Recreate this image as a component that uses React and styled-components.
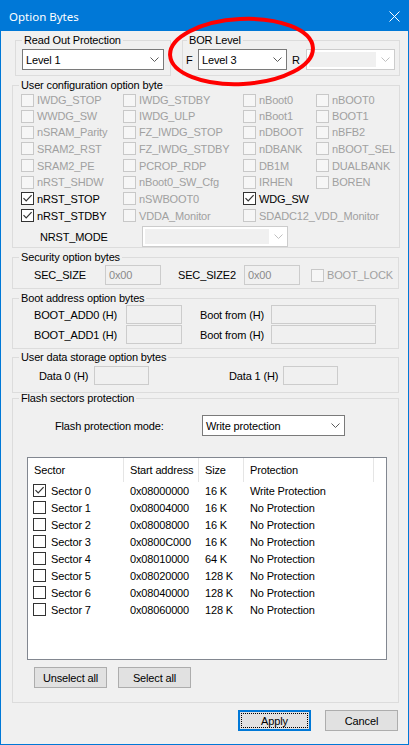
import React from "react";
import styled, { createGlobalStyle, css } from "styled-components";

const GlobalStyle = createGlobalStyle`
  *, *::before, *::after { box-sizing: border-box; }
  html, body { margin: 0; padding: 0; background: #f0f0f0; }
  body { font-family: "Liberation Sans", Arial, sans-serif; font-size: 11px; letter-spacing: -0.15px; color: #000; }
`;

const Window = styled.div`
  position: relative;
  width: 409px;
  height: 745px;
  border: 1px solid #0078d7;
  background: #f0f0f0;
  overflow: hidden;
`;

const TitleBar = styled.div`
  display: flex;
  align-items: center;
  justify-content: space-between;
  height: 30px;
  background: #0078d7;
  color: #fff;
  padding-left: 8px;
  font-family: "Noto Sans", "Open Sans", sans-serif;
  font-size: 11.5px;
  letter-spacing: 0;
`;

const CloseButton = styled.div`
  width: 28px;
  height: 30px;
  display: flex;
  align-items: center;
  justify-content: center;
`;

const Content = styled.div`
  padding-left: 11px;
  display: flex;
  flex-direction: column;
  align-items: flex-start;
`;

const Row = styled.div`
  display: flex;
  align-items: ${(p) => p.$align || "stretch"};
  margin-top: ${(p) => p.$mt || 0}px;
  padding-left: ${(p) => p.$pl || 0}px;
  gap: ${(p) => p.$gap || 0}px;
`;

const Group = styled.fieldset`
  margin: ${(p) => p.$mt ?? 0}px 0 0 ${(p) => p.$ml ?? 0}px;
  padding: 0;
  width: ${(p) => p.$w}px;
  border: 1px solid #dcdcdc;
  min-inline-size: 0;
`;

const Legend = styled.legend`
  margin-left: ${(p) => p.$lm ?? 6}px;
  padding: 0 2px;
  font-size: 11px;
  line-height: 13px;
  color: #000;
`;

const GroupBody = styled.div`
  padding: ${(p) => p.$p || "0"};
  display: flex;
  flex-direction: ${(p) => p.$dir || "column"};
  align-items: ${(p) => p.$align || "flex-start"};
  gap: ${(p) => p.$gap || 0}px;
`;

const OptionGrid = styled.div`
  display: grid;
  grid-template-columns: 102px 120px 73px 1fr;
  grid-template-rows: 16px 16px 16px 17px 17px 16px 17px 17px;
  align-items: center;
  width: 100%;
`;

const CheckItem = styled.div`
  display: flex;
  align-items: center;
  gap: ${(p) => p.$gap ?? 3}px;
  white-space: nowrap;
  margin-left: ${(p) => p.$ml || 0}px;
  color: ${(p) => (p.$disabled ? "#a0a0a0" : "#000")};
`;

const Box = styled.span`
  width: 13px;
  height: 13px;
  flex: none;
  display: flex;
  align-items: center;
  justify-content: center;
  border: 1px solid ${(p) => (p.$disabled ? "#c8c8c8" : "#333")};
  background: ${(p) => (p.$disabled ? "#f6f6f6" : "#fff")};
`;

const Label = styled.span`
  flex: none;
  width: ${(p) => (p.$w ? `${p.$w}px` : "auto")};
  margin-left: ${(p) => p.$ml || 0}px;
  padding-left: ${(p) => p.$pl || 0}px;
  white-space: nowrap;
  color: ${(p) => (p.$disabled ? "#a0a0a0" : "#000")};
`;

const Edit = styled.div`
  flex: none;
  width: ${(p) => p.$w}px;
  height: ${(p) => p.$h || 20}px;
  border: 1px solid #cccccc;
  background: #f0f0f0;
  color: #8a8a8a;
  padding-left: 3px;
  display: flex;
  align-items: center;
`;

const Combo = styled.div`
  flex: none;
  width: ${(p) => p.$w}px;
  height: 21px;
  display: flex;
  align-items: center;
  border: 1px solid ${(p) => (p.$disabled ? "#cccccc" : "#7a7a7a")};
  background: #fff;
  ${(p) =>
    p.$disabled &&
    css`
      padding: 2px 0 2px 2px;
    `}
`;

const ComboText = styled.span`
  flex: 1;
  align-self: stretch;
  display: flex;
  align-items: center;
  padding-left: 3px;
  white-space: nowrap;
  ${(p) =>
    p.$disabled &&
    css`
      background: #f0f0f0;
    `}
`;

const ComboArrow = styled.span`
  flex: none;
  width: 18px;
  display: flex;
  align-items: center;
  justify-content: center;
`;

const ListView = styled.div`
  margin: 21px 0 0 14px;
  width: 360px;
  height: 203px;
  border: 1px solid #828790;
  background: #fff;
`;

const ListRow = styled.div`
  display: grid;
  grid-template-columns: 96px 75px 45px 130px 1fr;
  height: ${(p) => (p.$header ? 24 : 17)}px;
`;

const HeaderCell = styled.div`
  display: flex;
  align-items: center;
  padding-left: 6px;
  border-right: ${(p) => (p.$last ? "none" : "1px solid #e5e5e5")};
  white-space: nowrap;
`;

const Cell = styled.div`
  display: flex;
  align-items: center;
  padding-left: ${(p) => p.$pl ?? 6}px;
  gap: 5px;
  white-space: nowrap;
`;

const Button = styled.button`
  position: relative;
  flex: none;
  width: 73px;
  height: 21px;
  padding: 0;
  margin-left: ${(p) => p.$ml || 0}px;
  background: #e1e1e1;
  border: 1px solid #adadad;
  font-family: "Liberation Sans", Arial, sans-serif;
  font-size: 11px;
  letter-spacing: inherit;
  color: #000;
  ${(p) =>
    p.$default &&
    css`
      border: 2px solid #0078d7;
      &::after {
        content: "";
        position: absolute;
        inset: 1px;
        border: 1px dotted #000;
      }
    `}
`;

const Footer = styled.div`
  display: flex;
  justify-content: flex-end;
  gap: 14px;
  margin-top: 7px;
  padding-right: 10px;
`;

const Annotation = styled.svg`
  position: absolute;
  left: -1px;
  top: -1px;
  pointer-events: none;
`;

const Chevron = ({ disabled }) => (
  <svg width="9" height="5" viewBox="0 0 9 5">
    <polyline
      points="0.5,0.5 4.5,4.5 8.5,0.5"
      fill="none"
      stroke={disabled ? "#c0c0c0" : "#5a5a5a"}
      strokeWidth="1"
    />
  </svg>
);

const Select = ({ w, value, disabled }) => (
  <Combo $w={w} $disabled={disabled}>
    <ComboText $disabled={disabled}>{value}</ComboText>
    <ComboArrow>
      <Chevron disabled={disabled} />
    </ComboArrow>
  </Combo>
);

const Check = ({ label, checked, disabled, gap, ml }) => (
  <CheckItem $disabled={disabled} $gap={gap} $ml={ml}>
    <Box $disabled={disabled}>
      {checked && (
        <svg width="11" height="11" viewBox="0 0 11 11">
          <polyline
            points="1.5,5.2 4.2,8 9.6,2.2"
            fill="none"
            stroke="#333"
            strokeWidth="1.2"
          />
        </svg>
      )}
    </Box>
    {label && <span>{label}</span>}
  </CheckItem>
);

const options = [
  ["IWDG_STOP", "IWDG_STDBY", "nBoot0", "nBOOT0"],
  ["WWDG_SW", "IWDG_ULP", "nBoot1", "BOOT1"],
  ["nSRAM_Parity", "FZ_IWDG_STOP", "nDBOOT", "nBFB2"],
  ["SRAM2_RST", "FZ_IWDG_STDBY", "nDBANK", "nBOOT_SEL"],
  ["SRAM2_PE", "PCROP_RDP", "DB1M", "DUALBANK"],
  ["nRST_SHDW", "nBoot0_SW_Cfg", "IRHEN", "BOREN"],
  ["nRST_STOP*", "nSWBOOT0", "WDG_SW*", null],
  ["nRST_STDBY*", "VDDA_Monitor", "SDADC12_VDD_Monitor", null],
];

const sectors = [
  ["Sector 0", "0x08000000", "16 K", "Write Protection", true],
  ["Sector 1", "0x08004000", "16 K", "No Protection", false],
  ["Sector 2", "0x08008000", "16 K", "No Protection", false],
  ["Sector 3", "0x0800C000", "16 K", "No Protection", false],
  ["Sector 4", "0x08010000", "64 K", "No Protection", false],
  ["Sector 5", "0x08020000", "128 K", "No Protection", false],
  ["Sector 6", "0x08040000", "128 K", "No Protection", false],
  ["Sector 7", "0x08060000", "128 K", "No Protection", false],
];

export default function App() {
  return (
    <>
      <GlobalStyle />
      <Window>
        <TitleBar>
          <span>Option Bytes</span>
          <CloseButton>
            <svg width="11" height="11" viewBox="0 0 11 11">
              <path d="M0.5 0.5 L10.5 10.5 M10.5 0.5 L0.5 10.5" stroke="#fff" strokeWidth="1" />
            </svg>
          </CloseButton>
        </TitleBar>

        <Content>
          <Row $mt={3}>
            <Group $w={156} $ml={3}>
              <Legend>Read Out Protection</Legend>
              <GroupBody $p="2px 6px 5px 6px">
                <Select w={142} value="Level 1" />
              </GroupBody>
            </Group>
            <Group $w={218} $ml={11}>
              <Legend $lm={4}>BOR Level</Legend>
              <GroupBody $p="2px 0 5px 0" $dir="row" $align="center">
                <Label $w={15} $pl={3}>F</Label>
                <Select w={89} value="Level 3" />
                <Label $w={19} $pl={5}>R</Label>
                <Select w={89} value="" disabled />
              </GroupBody>
            </Group>
          </Row>

          <Group $w={388} $mt={3}>
            <Legend>User configuration option byte</Legend>
            <GroupBody $p="0 0 0 8px">
              <OptionGrid>
                {options.flat().map((o, i) =>
                  o ? (
                    <Check
                      key={i}
                      label={o.replace("*", "")}
                      checked={o.endsWith("*")}
                      disabled={!o.endsWith("*")}
                    />
                  ) : (
                    <span key={i} />
                  )
                )}
              </OptionGrid>
              <Row $mt={2} $pl={19} $align="center">
                <Label $w={102}>NRST_MODE</Label>
                <Select w={146} value="" disabled />
              </Row>
            </GroupBody>
          </Group>

          <Group $w={387} $mt={3}>
            <Legend>Security option bytes</Legend>
            <GroupBody $p="1px 0 3px 21px" $dir="row" $align="center">
              <Label $w={71}>SEC_SIZE</Label>
              <Edit $w={56}>0x00</Edit>
              <Label $w={66} $ml={17}>SEC_SIZE2</Label>
              <Edit $w={56}>0x00</Edit>
              <Check label="BOOT_LOCK" disabled ml={11} />
            </GroupBody>
          </Group>

          <Group $w={387} $mt={3}>
            <Legend>Boot address option bytes</Legend>
            <GroupBody $p="0 0 4px 21px" $gap={1}>
              {["BOOT_ADD0 (H)", "BOOT_ADD1 (H)"].map((l) => (
                <Row key={l} $align="center">
                  <Label $w={92}>{l}</Label>
                  <Edit $w={56} $h={19} />
                  <Label $w={71} $ml={18}>Boot from (H)</Label>
                  <Edit $w={105} $h={19} />
                </Row>
              ))}
            </GroupBody>
          </Group>

          <Group $w={387} $mt={2}>
            <Legend>User data storage option bytes</Legend>
            <GroupBody $p="2px 0 7px 26px" $dir="row" $align="center">
              <Label $w={55}>Data 0 (H)</Label>
              <Edit $w={55} $h={19} />
              <Label $w={54} $ml={80}>Data 1 (H)</Label>
              <Edit $w={55} $h={19} />
            </GroupBody>
          </Group>

          <Group $w={387} $mt={-1}>
            <Legend>Flash sectors protection</Legend>
            <GroupBody $p="10px 0 14px 0">
              <Row $pl={42} $align="center">
                <Label $w={147}>Flash protection mode:</Label>
                <Select w={143} value="Write protection" />
              </Row>
              <ListView>
                <ListRow $header>
                  <HeaderCell>Sector</HeaderCell>
                  <HeaderCell>Start address</HeaderCell>
                  <HeaderCell>Size</HeaderCell>
                  <HeaderCell>Protection</HeaderCell>
                  <HeaderCell $last />
                </ListRow>
                {sectors.map(([name, addr, size, prot, checked]) => (
                  <ListRow key={name}>
                    <Cell $pl={5}>
                      <Check label={name} checked={checked} gap={5} />
                    </Cell>
                    <Cell>{addr}</Cell>
                    <Cell>{size}</Cell>
                    <Cell>{prot}</Cell>
                    <Cell />
                  </ListRow>
                ))}
              </ListView>
              <Row $mt={7} $pl={21}>
                <Button>Unselect all</Button>
                <Button $ml={11}>Select all</Button>
              </Row>
            </GroupBody>
          </Group>
        </Content>

        <Footer>
          <Button $default>Apply</Button>
          <Button>Cancel</Button>
        </Footer>

        <Annotation width="409" height="110" viewBox="0 0 409 110">
          <ellipse
            cx="241.5"
            cy="51.5"
            rx="71.5"
            ry="32.5"
            fill="none"
            stroke="#ff0000"
            strokeWidth="4"
            transform="rotate(-3 241.5 51.5)"
          />
        </Annotation>
      </Window>
    </>
  );
}
